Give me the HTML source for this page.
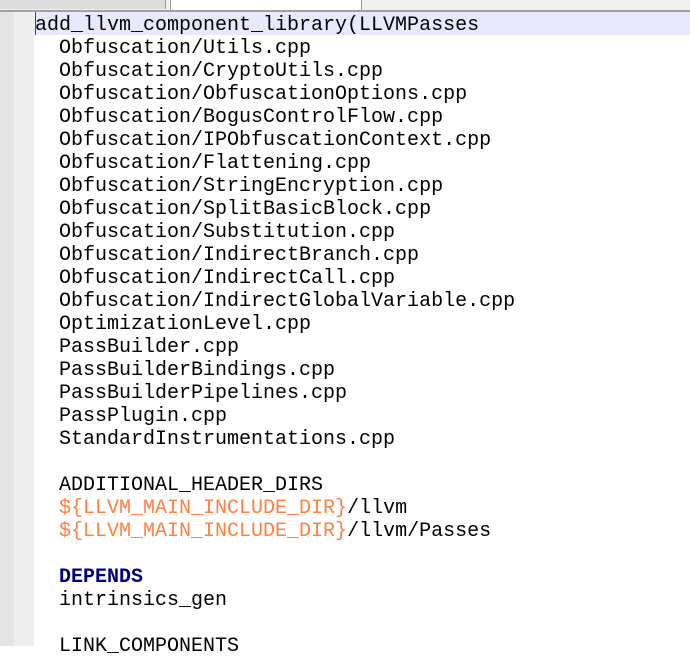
<!DOCTYPE html>
<html><head><style>
html,body{margin:0;padding:0;width:690px;height:646px;overflow:hidden;background:#fff;}
.tabbar{position:absolute;left:0;top:0;width:690px;height:10px;background:#f0f0f0;border-bottom:2px solid #a0a0a0;overflow:hidden;}
.tab1{position:absolute;left:0;top:-8px;width:165px;height:17px;background:#dcdcdc;border-right:1px solid #999;}
.tab2{position:absolute;left:170px;top:-8px;width:190px;height:17px;background:#fff;border:1px solid #999;}
.gut{position:absolute;left:0;top:12px;width:14px;height:634px;background:#e4e4e4;}
.fold{position:absolute;left:14px;top:12px;width:20px;height:634px;background-color:#f4f4f4;background-image:radial-gradient(#dcdcdc 0.6px,transparent 0.8px);background-size:2px 2px;}
.hl{position:absolute;left:35px;top:12px;width:655px;height:23px;background:#e8e8ff;}
.caret{position:absolute;left:35px;top:12px;width:1px;height:23px;background:#8000ff;}
pre{position:absolute;left:35px;top:14px;margin:0;font-family:"Liberation Mono",monospace;font-size:20px;line-height:23px;color:#000;}
.o{color:#ff8040}.b{color:#000080;font-weight:bold}
</style></head><body>
<div class="tabbar"><div class="tab1"></div><div class="tab2"></div></div>
<div class="gut"></div><div class="fold"></div>
<div class="hl"></div><div class="caret"></div>
<pre>add_llvm_component_library(LLVMPasses
  Obfuscation/Utils.cpp
  Obfuscation/CryptoUtils.cpp
  Obfuscation/ObfuscationOptions.cpp
  Obfuscation/BogusControlFlow.cpp
  Obfuscation/IPObfuscationContext.cpp
  Obfuscation/Flattening.cpp
  Obfuscation/StringEncryption.cpp
  Obfuscation/SplitBasicBlock.cpp
  Obfuscation/Substitution.cpp
  Obfuscation/IndirectBranch.cpp
  Obfuscation/IndirectCall.cpp
  Obfuscation/IndirectGlobalVariable.cpp
  OptimizationLevel.cpp
  PassBuilder.cpp
  PassBuilderBindings.cpp
  PassBuilderPipelines.cpp
  PassPlugin.cpp
  StandardInstrumentations.cpp

  ADDITIONAL_HEADER_DIRS
  <span class="o">${LLVM_MAIN_INCLUDE_DIR}</span>/llvm
  <span class="o">${LLVM_MAIN_INCLUDE_DIR}</span>/llvm/Passes

  <span class="b">DEPENDS</span>
  intrinsics_gen

  LINK_COMPONENTS</pre>
</body></html>
